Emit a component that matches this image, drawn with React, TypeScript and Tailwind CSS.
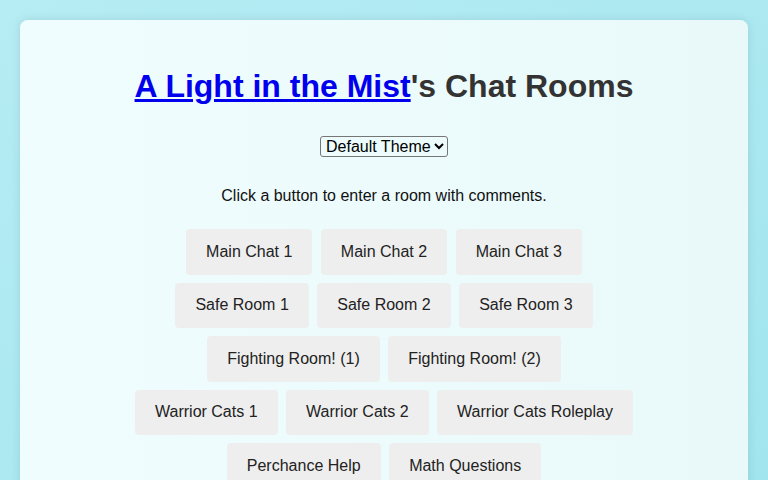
import React from "react";

const rows: string[][] = [
  ["Main Chat 1", "Main Chat 2", "Main Chat 3"],
  ["Safe Room 1", "Safe Room 2", "Safe Room 3"],
  ["Fighting Room! (1)", "Fighting Room! (2)"],
  ["Warrior Cats 1", "Warrior Cats 2", "Warrior Cats Roleplay"],
  ["Perchance Help", "Math Questions"],
];

export default function App() {
  return (
    <div
      className="w-[768px] h-[480px] overflow-hidden bg-gradient-to-br from-[#b6ecf4] to-[#a1e5ee] pt-[20px] px-[20px]"
      style={{ fontFamily: '"Liberation Sans", Arial, sans-serif' }}
    >
      <div className="w-[728px] min-h-[520px] rounded-[8px] bg-gradient-to-r from-[#f0fdfe] to-[#e9f9fa] shadow-[0_0_10px_rgba(0,0,0,0.1)] pt-[48px] flex flex-col items-center">
        <h1 className="m-0 text-[32px] leading-[37px] font-bold text-[#333333]">
          <a href="#" className="text-[#0000ee] underline">A Light in the Mist</a>'s Chat Rooms
        </h1>
        <select className="mt-[31px] h-[21px] text-[16px] text-black border border-[#767676] rounded-[3px] pl-[1px] bg-transparent appearance-auto">
          <option>Default Theme</option>
        </select>
        <p className="mt-[30px] text-[16px] leading-[18.4px] text-[#111111]">
          Click a button to enter a room with comments.
        </p>
        <div className="mt-[24px] flex flex-col gap-[8px] items-center">
          {rows.map((row, i) => (
            <div key={i} className="flex gap-[8.5px]">
              {row.map((b) => (
                <button
                  key={b}
                  className="bg-[#eeeeee] text-[#222222] text-[16px] leading-[18.4px] px-[20px] py-[13.5px] rounded-[4px]"
                >
                  {b}
                </button>
              ))}
            </div>
          ))}
        </div>
      </div>
    </div>
  );
}
